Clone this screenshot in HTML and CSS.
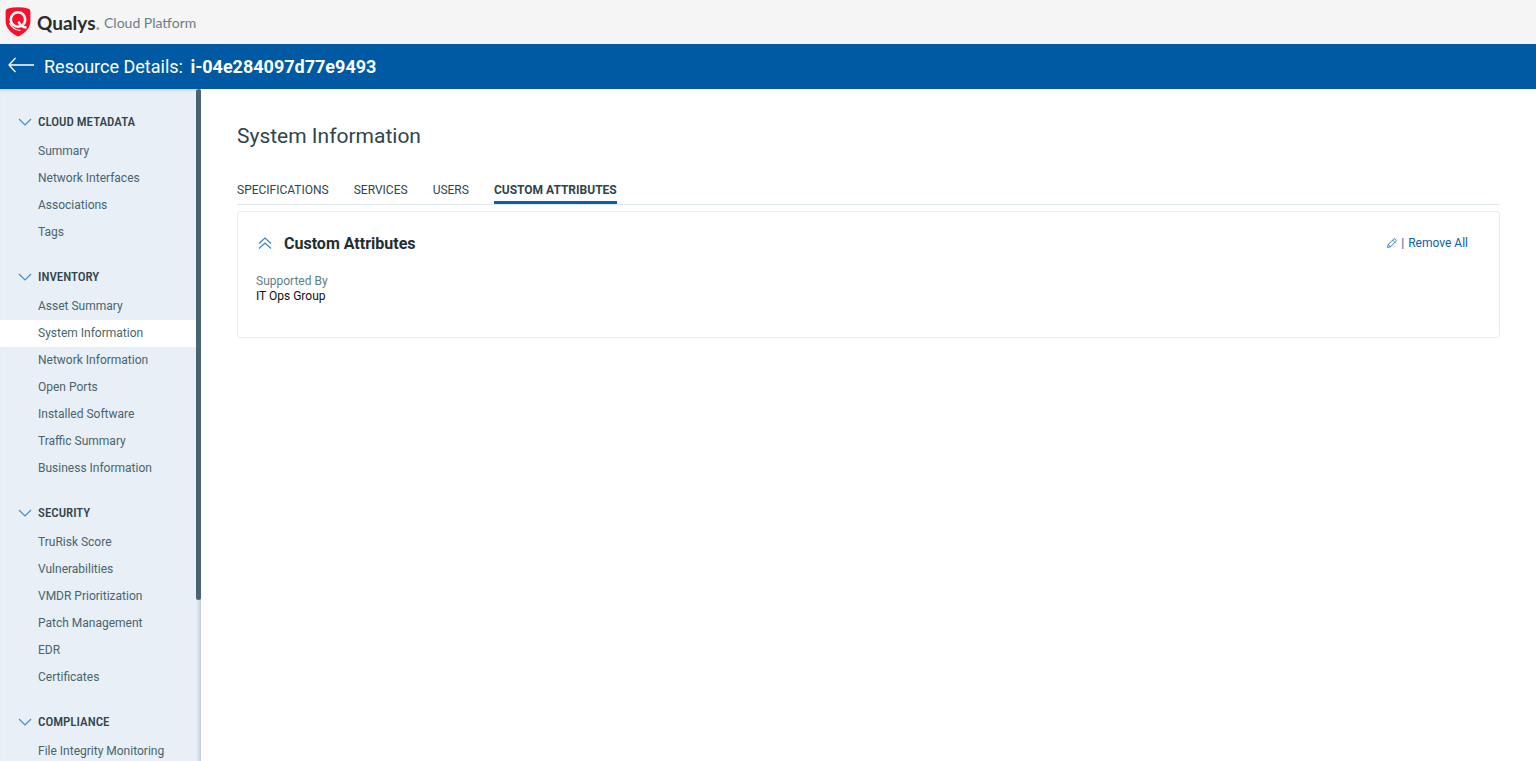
FILE: index.html
```html
<!DOCTYPE html>
<html lang="en">
<head>
    <meta charset="UTF-8">
    <meta name="viewport" content="width=device-width, initial-scale=1.0">
    <title>Resource Details - Qualys Cloud Platform</title>
    <link rel="stylesheet" href="styles.css">
</head>
<body>
    <header class="brand-bar">
        <svg class="brand-logo" viewBox="0 0 26 30" aria-hidden="true">
            <path d="M3 1.400Q13-1 23 1.400Q25.400 2 25.400 4.500V14C25.400 21 20 26.500 13 29.500C6 26.500.6 21 .6 14V4.500Q.6 2 3 1.400Z" fill="#fa0f2b"/>
            <circle cx="13" cy="12.500" r="7.200" fill="none" stroke="#fff" stroke-width="2.600"/>
            <path d="M13.500 14.500C15 18 17.500 20.500 21.500 20.500" fill="none" stroke="#fff" stroke-width="2.400"/>
            <path d="M4.500 16C6.500 20.500 10 23 15.500 23.500" fill="none" stroke="#fff" stroke-width="1.200"/>
        </svg>
        <span class="brand-name">Qualys<span class="brand-dot">.</span></span>
        <span class="brand-product">Cloud Platform</span>
    </header>

    <div class="title-bar">
        <button type="button" class="back-btn" aria-label="Back">
            <svg width="26" height="16" viewBox="0 0 26 16" fill="none" stroke="#fff" stroke-width="1.300">
                <path d="M26 8H1M7.500 1L1 8L7.500 15"/>
            </svg>
        </button>
        <h1 class="page-title">Resource Details: <strong>i-04e284097d77e9493</strong></h1>
    </div>

    <div class="layout">
        <aside class="sidebar">
            <nav class="side-nav">
                <section class="nav-group">
                    <button type="button" class="nav-heading"><svg class="chevron" viewBox="0 0 12 8"><path d="M0 1L6 7L12 1"/></svg>CLOUD METADATA</button>
                    <a href="#">Summary</a>
                    <a href="#">Network Interfaces</a>
                    <a href="#">Associations</a>
                    <a href="#">Tags</a>
                </section>
                <section class="nav-group">
                    <button type="button" class="nav-heading"><svg class="chevron" viewBox="0 0 12 8"><path d="M0 1L6 7L12 1"/></svg>INVENTORY</button>
                    <a href="#">Asset Summary</a>
                    <a href="#" class="active">System Information</a>
                    <a href="#">Network Information</a>
                    <a href="#">Open Ports</a>
                    <a href="#">Installed Software</a>
                    <a href="#">Traffic Summary</a>
                    <a href="#">Business Information</a>
                </section>
                <section class="nav-group">
                    <button type="button" class="nav-heading"><svg class="chevron" viewBox="0 0 12 8"><path d="M0 1L6 7L12 1"/></svg>SECURITY</button>
                    <a href="#">TruRisk Score</a>
                    <a href="#">Vulnerabilities</a>
                    <a href="#">VMDR Prioritization</a>
                    <a href="#">Patch Management</a>
                    <a href="#">EDR</a>
                    <a href="#">Certificates</a>
                </section>
                <section class="nav-group">
                    <button type="button" class="nav-heading"><svg class="chevron" viewBox="0 0 12 8"><path d="M0 1L6 7L12 1"/></svg>COMPLIANCE</button>
                    <a href="#">File Integrity Monitoring</a>
                </section>
            </nav>
            <div class="scroll-track"><div class="scroll-thumb"></div></div>
        </aside>

        <main class="content">
            <h2 class="content-title">System Information</h2>
            <div class="tabs" role="tablist">
                <button type="button" class="tab" role="tab">SPECIFICATIONS</button>
                <button type="button" class="tab" role="tab">SERVICES</button>
                <button type="button" class="tab" role="tab">USERS</button>
                <button type="button" class="tab selected" role="tab" aria-selected="true">CUSTOM ATTRIBUTES</button>
            </div>

            <section class="card">
                <div class="card-header">
                    <button type="button" class="collapse-btn" aria-label="Collapse">
                        <svg width="14" height="12" viewBox="0 0 14 12"><path d="M1 6.500L7 1L13 6.500M1 11.500L7 6L13 11.500"/></svg>
                    </button>
                    <h3>Custom Attributes</h3>
                    <div class="card-actions">
                        <button type="button" class="edit-btn" aria-label="Edit">
                            <svg width="10" height="10" viewBox="0 0 10 10"><path d="M.6 9.400L1.200 6.500L6.500 1.200Q7.400.3 8.300 1.200L8.800 1.700Q9.700 2.600 8.800 3.500L3.500 8.800ZM5.600 2.100L7.900 4.400M1.200 6.500L3.500 8.800"/></svg>
                        </button>
                        <span class="divider">|</span>
                        <button type="button" class="remove-btn">Remove All</button>
                    </div>
                </div>
                <dl class="attribute">
                    <dt>Supported By</dt>
                    <dd>IT Ops Group</dd>
                </dl>
            </section>
        </main>
    </div>
</body>
</html>
```
FILE: styles.css
```css
* {
    margin: 0;
    padding: 0;
    box-sizing: border-box;
}

body {
    font-family: Roboto, "Liberation Sans", sans-serif;
    font-size: 12px;
    color: #2f454e;
    background: #fff;
    height: 100vh;
    display: flex;
    flex-direction: column;
    overflow: hidden;
}

button {
    font: inherit;
    color: inherit;
    background: none;
    border: none;
    cursor: pointer;
}

a {
    text-decoration: none;
}

svg {
    display: block;
}

.brand-bar {
    flex: none;
    height: 44px;
    background: #f5f5f5;
    display: flex;
    align-items: center;
    padding-left: 5px;
}

.brand-logo {
    width: 26px;
    height: 30px;
    margin-right: 6px;
}

.brand-name {
    font-family: Lato, sans-serif;
    font-size: 19px;
    font-weight: 700;
    color: #2b2b2b;
}

.brand-dot {
    color: #9aa3a8;
}

.brand-product {
    font-family: Lato, sans-serif;
    font-size: 14px;
    color: #6f7c85;
    margin-left: 4px;
}

.title-bar {
    flex: none;
    height: 45px;
    background: #005aa3;
    color: #fff;
    display: flex;
    align-items: center;
    padding-left: 8px;
    gap: 10px;
}

.back-btn {
    padding-bottom: 4px;
}

.page-title {
    font-size: 18px;
    font-weight: 400;
}

.page-title strong {
    font-weight: 700;
    margin-left: 3px;
}

.layout {
    flex: 1;
    min-height: 0;
    display: flex;
}

.sidebar {
    flex: none;
    width: 201px;
    display: flex;
    background: #e8eff6;
    box-shadow: inset 0 3px 3px -2px #c3ccd4;
}

.side-nav {
    flex: 1;
    padding-top: 16px;
    overflow: hidden;
}

.nav-group {
    display: flex;
    flex-direction: column;
    margin-bottom: 14px;
}

.nav-heading {
    display: flex;
    align-items: center;
    gap: 7px;
    height: 33px;
    padding-left: 19px;
    font-family: "Roboto Condensed", "Liberation Sans Narrow", sans-serif;
    font-size: 13px;
    font-weight: 500;
    color: #2f454e;
    white-space: nowrap;
}

.chevron {
    width: 12px;
    height: 8px;
    fill: none;
    stroke: #3f8fd0;
    stroke-width: 1.2;
    overflow: visible;
}

.nav-group a {
    height: 27px;
    line-height: 27px;
    padding-left: 38px;
    color: #47656f;
}

.nav-group a.active {
    background: #fff;
}

.scroll-track {
    width: 5px;
    background: linear-gradient(to right, #e8eff6, #c4cdd6);
}

.scroll-thumb {
    height: 76%;
    border-radius: 3px;
    background: #486471;
}

.content {
    flex: 1;
    min-width: 0;
    padding: 33px 36px;
}

.content-title {
    font-size: 21px;
    font-weight: 400;
    line-height: 28px;
}

.tabs {
    display: flex;
    gap: 25px;
    margin-top: 32px;
    border-bottom: 1px solid #dfe8ec;
}

.tab {
    height: 22px;
    line-height: 16px;
    padding-bottom: 3px;
    border-bottom: 3px solid transparent;
}

.tab.selected {
    font-weight: 700;
    border-bottom-color: #0a60ab;
}

.card {
    margin-top: 6px;
    padding: 19px 31px 33px 18px;
    border: 1px solid #e6ebed;
    border-radius: 3px;
}

.card-header {
    display: flex;
    align-items: center;
    height: 24px;
}

.collapse-btn {
    margin: 0 12px 0 2px;
}

.collapse-btn svg {
    fill: none;
    stroke: #2d83cf;
    stroke-width: 1.1;
}

.card-header h3 {
    font-size: 16px;
    font-weight: 700;
    color: #1f2d33;
}

.card-actions {
    display: flex;
    align-items: center;
    gap: 4px;
    margin-left: auto;
    color: #0a60ab;
}

.edit-btn svg {
    fill: none;
    stroke: #0a60ab;
    stroke-width: 0.8;
}

.attribute {
    margin-top: 19px;
    line-height: 15px;
}

.attribute dt {
    color: #5b7e8b;
}

.attribute dd {
    color: #111;
}
```
